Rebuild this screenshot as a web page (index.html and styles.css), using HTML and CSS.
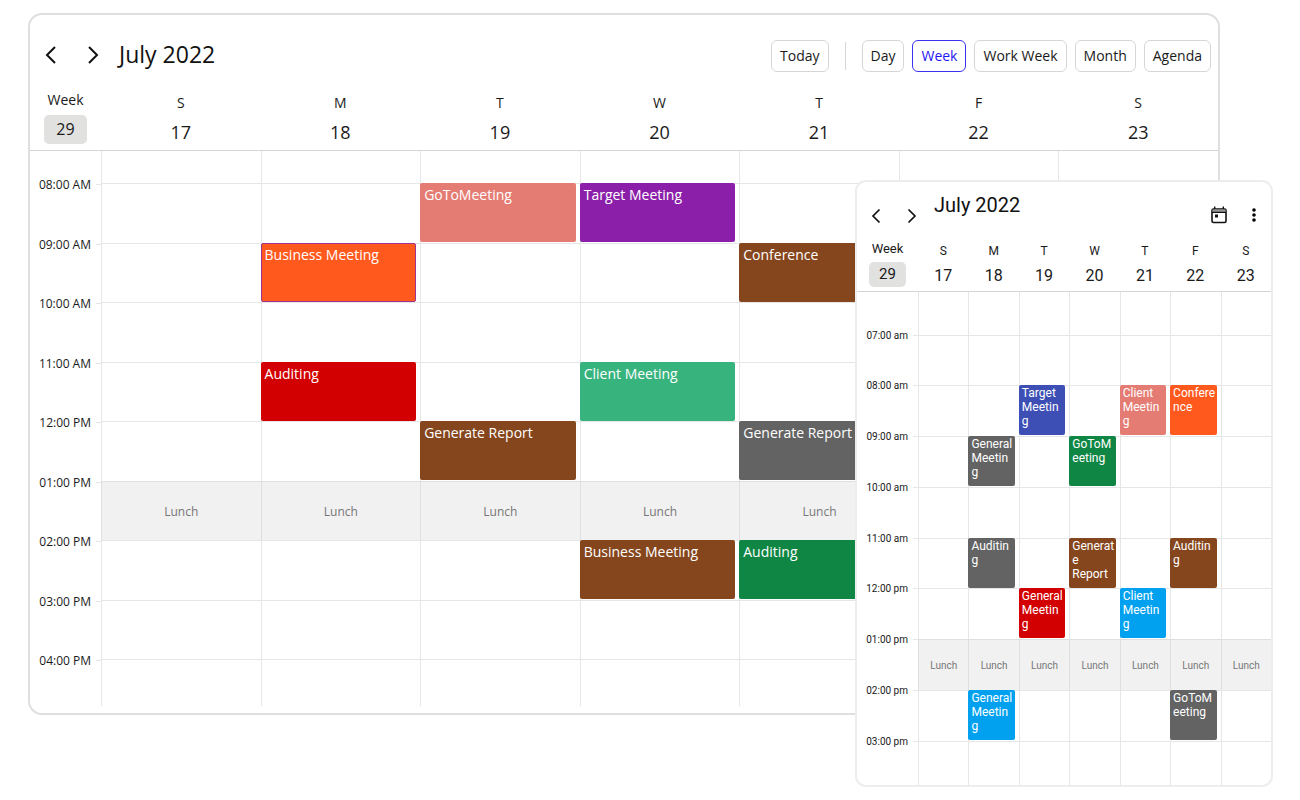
FILE: index.html
```html
<!DOCTYPE html>
<html lang="en">
<head>
    <meta charset="UTF-8">
    <meta name="viewport" content="width=device-width, initial-scale=1.0">
    <title>Scheduler - Week View</title>
    <link rel="stylesheet" href="styles.css">
</head>
<body>
    <main class="stage">
        <!-- Desktop scheduler -->
        <section class="scheduler desktop">
            <header class="toolbar">
                <button type="button" class="nav-btn" aria-label="Previous week">
                    <svg width="12" height="18" viewBox="0 0 12 18"><path d="M10 1 L2 9 L10 17"/></svg>
                </button>
                <button type="button" class="nav-btn" aria-label="Next week">
                    <svg width="12" height="18" viewBox="0 0 12 18"><path d="M2 1 L10 9 L2 17"/></svg>
                </button>
                <h2 class="title">July 2022</h2>
                <div class="views">
                    <button type="button" class="view-btn">Today</button>
                    <span class="divider"></span>
                    <button type="button" class="view-btn">Day</button>
                    <button type="button" class="view-btn active">Week</button>
                    <button type="button" class="view-btn">Work Week</button>
                    <button type="button" class="view-btn">Month</button>
                    <button type="button" class="view-btn">Agenda</button>
                </div>
            </header>
            <table class="week">
                <thead>
                    <tr>
                        <th class="week-no">Week<span class="badge">29</span></th>
                        <th>S<span class="date">17</span></th>
                        <th>M<span class="date">18</span></th>
                        <th>T<span class="date">19</span></th>
                        <th>W<span class="date">20</span></th>
                        <th>T<span class="date">21</span></th>
                        <th>F<span class="date">22</span></th>
                        <th>S<span class="date">23</span></th>
                    </tr>
                </thead>
                <tbody>
                    <tr>
                        <th></th>
                        <td></td><td></td><td></td><td></td><td></td><td></td><td></td>
                    </tr>
                    <tr>
                        <th><span class="time">08:00 AM</span></th>
                        <td></td>
                        <td></td>
                        <td><div class="event salmon">GoToMeeting</div></td>
                        <td><div class="event purple">Target Meeting</div></td>
                        <td></td>
                        <td></td>
                        <td></td>
                    </tr>
                    <tr>
                        <th><span class="time">09:00 AM</span></th>
                        <td></td>
                        <td><div class="event orange selected">Business Meeting</div></td>
                        <td></td>
                        <td></td>
                        <td><div class="event brown">Conference</div></td>
                        <td></td>
                        <td></td>
                    </tr>
                    <tr>
                        <th><span class="time">10:00 AM</span></th>
                        <td></td><td></td><td></td><td></td><td></td><td></td><td></td>
                    </tr>
                    <tr>
                        <th><span class="time">11:00 AM</span></th>
                        <td></td>
                        <td><div class="event red">Auditing</div></td>
                        <td></td>
                        <td><div class="event mint">Client Meeting</div></td>
                        <td></td>
                        <td></td>
                        <td></td>
                    </tr>
                    <tr>
                        <th><span class="time">12:00 PM</span></th>
                        <td></td>
                        <td></td>
                        <td><div class="event brown">Generate Report</div></td>
                        <td></td>
                        <td><div class="event gray">Generate Report</div></td>
                        <td></td>
                        <td></td>
                    </tr>
                    <tr class="lunch">
                        <th><span class="time">01:00 PM</span></th>
                        <td>Lunch</td><td>Lunch</td><td>Lunch</td><td>Lunch</td><td>Lunch</td><td></td><td></td>
                    </tr>
                    <tr>
                        <th><span class="time">02:00 PM</span></th>
                        <td></td>
                        <td></td>
                        <td></td>
                        <td><div class="event brown">Business Meeting</div></td>
                        <td><div class="event green">Auditing</div></td>
                        <td></td>
                        <td></td>
                    </tr>
                    <tr>
                        <th><span class="time">03:00 PM</span></th>
                        <td></td><td></td><td></td><td></td><td></td><td></td><td></td>
                    </tr>
                    <tr>
                        <th><span class="time">04:00 PM</span></th>
                        <td></td><td></td><td></td><td></td><td></td><td></td><td></td>
                    </tr>
                </tbody>
            </table>
        </section>

        <!-- Mobile scheduler -->
        <section class="scheduler mobile">
            <header class="toolbar">
                <button type="button" class="nav-btn" aria-label="Previous week">
                    <svg width="10" height="16" viewBox="0 0 10 16"><path d="M8.5 1.5 L2 8 L8.5 14.5"/></svg>
                </button>
                <button type="button" class="nav-btn" aria-label="Next week">
                    <svg width="10" height="16" viewBox="0 0 10 16"><path d="M1.5 1.5 L8 8 L1.5 14.5"/></svg>
                </button>
                <h2 class="title">July 2022</h2>
                <button type="button" class="icon-btn" aria-label="Go to date">
                    <svg width="16" height="18" viewBox="0 0 16 18">
                        <rect x="1" y="3" width="14" height="13.5" rx="1.5" fill="none" stroke="#111" stroke-width="1.6"/>
                        <rect x="1.5" y="3.5" width="13" height="2.5" fill="#999"/>
                        <path d="M1 6.4 H15 M3.7 0.5 V3 M12.3 0.5 V3" stroke="#111" stroke-width="1.4"/>
                        <rect x="4" y="8.5" width="3" height="3" fill="#111"/>
                    </svg>
                </button>
                <button type="button" class="icon-btn" aria-label="More options">
                    <svg width="4" height="14" viewBox="0 0 4 14">
                        <circle cx="2" cy="2" r="1.8"/><circle cx="2" cy="7" r="1.8"/><circle cx="2" cy="12" r="1.8"/>
                    </svg>
                </button>
            </header>
            <table class="week">
                <thead>
                    <tr>
                        <th class="week-no">Week<span class="badge">29</span></th>
                        <th>S<span class="date">17</span></th>
                        <th>M<span class="date">18</span></th>
                        <th>T<span class="date">19</span></th>
                        <th>W<span class="date">20</span></th>
                        <th>T<span class="date">21</span></th>
                        <th>F<span class="date">22</span></th>
                        <th>S<span class="date">23</span></th>
                    </tr>
                </thead>
                <tbody>
                    <tr>
                        <th></th>
                        <td></td><td></td><td></td><td></td><td></td><td></td><td></td>
                    </tr>
                    <tr>
                        <th><span class="time">07:00 am</span></th>
                        <td></td><td></td><td></td><td></td><td></td><td></td><td></td>
                    </tr>
                    <tr>
                        <th><span class="time">08:00 am</span></th>
                        <td></td>
                        <td></td>
                        <td><div class="event indigo">Target Meeting</div></td>
                        <td></td>
                        <td><div class="event salmon">Client Meeting</div></td>
                        <td><div class="event orange">Conference</div></td>
                        <td></td>
                    </tr>
                    <tr>
                        <th><span class="time">09:00 am</span></th>
                        <td></td>
                        <td><div class="event gray">General Meeting</div></td>
                        <td></td>
                        <td><div class="event green">GoToMeeting</div></td>
                        <td></td>
                        <td></td>
                        <td></td>
                    </tr>
                    <tr>
                        <th><span class="time">10:00 am</span></th>
                        <td></td><td></td><td></td><td></td><td></td><td></td><td></td>
                    </tr>
                    <tr>
                        <th><span class="time">11:00 am</span></th>
                        <td></td>
                        <td><div class="event gray">Auditing</div></td>
                        <td></td>
                        <td><div class="event brown">Generate Report</div></td>
                        <td></td>
                        <td><div class="event brown">Auditing</div></td>
                        <td></td>
                    </tr>
                    <tr>
                        <th><span class="time">12:00 pm</span></th>
                        <td></td>
                        <td></td>
                        <td><div class="event red">General Meeting</div></td>
                        <td></td>
                        <td><div class="event blue">Client Meeting</div></td>
                        <td></td>
                        <td></td>
                    </tr>
                    <tr class="lunch">
                        <th><span class="time">01:00 pm</span></th>
                        <td>Lunch</td><td>Lunch</td><td>Lunch</td><td>Lunch</td><td>Lunch</td><td>Lunch</td><td>Lunch</td>
                    </tr>
                    <tr>
                        <th><span class="time">02:00 pm</span></th>
                        <td></td>
                        <td><div class="event blue">General Meeting</div></td>
                        <td></td>
                        <td></td>
                        <td></td>
                        <td><div class="event gray">GoToMeeting</div></td>
                        <td></td>
                    </tr>
                    <tr>
                        <th><span class="time">03:00 pm</span></th>
                        <td></td><td></td><td></td><td></td><td></td><td></td><td></td>
                    </tr>
                </tbody>
            </table>
        </section>
    </main>
</body>
</html>
```

FILE: styles.css
```css
* {
    box-sizing: border-box;
}
body {
    margin: 0;
    background: #fff;
    color: #1a1a1a;
}
/* both schedulers share one grid cell so the phone view overlaps the desktop one */
.stage {
    display: grid;
    align-items: start;
    padding: 13px 27px 13px 28px;
}
.scheduler {
    grid-area: 1 / 1;
    background: #fff;
    border: 2px solid #dfdfdf;
    overflow: hidden;
}
.desktop {
    margin-right: 53px;
    border-radius: 14px;
    padding-bottom: 7px;
    font-family: "Open Sans", "Noto Sans", sans-serif;
}
.mobile {
    justify-self: end;
    width: 418px;
    margin-top: 167px;
    border-color: #ededed;
    border-radius: 11px;
    font-family: Roboto, sans-serif;
}

/* toolbar */
.toolbar {
    display: flex;
    align-items: center;
}
.desktop .toolbar {
    height: 73px;
    padding: 8px 7px 0 0;
}
.mobile .toolbar {
    height: 56px;
    padding: 10px 0 0 1px;
}
button {
    font: inherit;
    color: inherit;
    background: none;
    border: none;
    padding: 0;
    cursor: pointer;
}
.nav-btn {
    display: flex;
    justify-content: center;
    width: 42px;
    padding-bottom: 2px;
}
.mobile .nav-btn {
    width: 36px;
    padding: 2px 0 0;
}
.nav-btn path {
    fill: none;
    stroke: #111;
    stroke-width: 2;
}
.mobile .nav-btn path {
    stroke-width: 1.7;
}
.icon-btn {
    display: flex;
    justify-content: center;
    width: 35px;
}
.title {
    flex: 1;
    margin: 0;
    font-weight: 400;
    color: #111;
}
.desktop .title {
    padding: 0 0 4px 5px;
    font-size: 23px;
    line-height: 30px;
}
.mobile .title {
    padding: 0 0 20px 4px;
    font-size: 20px;
    line-height: 24px;
}
.views {
    display: flex;
    align-items: center;
    gap: 8px;
}
.view-btn {
    height: 32px;
    padding: 0 8px;
    border: 1px solid #d6d6d6;
    border-radius: 6px;
    font-size: 14px;
}
.view-btn.active {
    border: 1px solid #3a32f0;
    color: #1f16f5;
}
.divider {
    width: 1px;
    height: 28px;
    margin: 0 8px;
    background: #d6d6d6;
}

/* week grid */
.week {
    width: 100%;
    table-layout: fixed;
    border-spacing: 0;
}
.week th,
.week td {
    padding: 0;
    font-weight: 400;
    vertical-align: top;
}
.week td {
    border-top: 1px solid #e6e6e6;
    border-left: 1px solid #e6e6e6;
}
.week tbody tr:first-child td {
    border-top: none;
}
.week thead th {
    border-bottom: 1px solid #d4d4d4;
}
.desktop thead th {
    height: 63px;
    padding-top: 5px;
    font-size: 14px;
    line-height: 20px;
}
.desktop thead .week-no {
    width: 71px;
    padding-top: 2px;
}
.date {
    display: block;
}
.desktop .date {
    padding-top: 7px;
    font-size: 18px;
    line-height: 24px;
}
.badge {
    display: block;
    margin: 5px auto 0;
    background: #e1e1e0;
    border-radius: 5px;
}
.desktop .badge {
    width: 43px;
    font-size: 16px;
    line-height: 29px;
}
.mobile thead th {
    height: 54px;
    padding-top: 5px;
    font-size: 12px;
    line-height: 16px;
}
.mobile thead .week-no {
    width: 61px;
    padding-top: 3px;
    font-size: 13px;
}
.mobile .date {
    padding-top: 7px;
    font-size: 16px;
    line-height: 20px;
}
.mobile .badge {
    width: 37px;
    font-size: 15px;
    line-height: 25px;
}

/* row heights */
.desktop tbody tr {
    height: 59px;
}
.desktop tbody tr:nth-child(even) {
    height: 60px;
}
.desktop tbody tr:first-child {
    height: 32px;
}
.desktop tbody tr:last-child {
    height: 47px;
}
.mobile tbody tr {
    height: 51px;
}
.mobile tbody tr:nth-child(4n+2) {
    height: 50px;
}
.mobile tbody tr:first-child {
    height: 43px;
}
.mobile tbody tr:last-child {
    height: 44px;
}

/* hour labels sit on the row line, with a short tick after them */
.time {
    display: flex;
    align-items: center;
    justify-content: flex-end;
    gap: 5px;
    height: 20px;
    margin-top: -9px;
    margin-bottom: -9px;
    white-space: nowrap;
}
.time::after {
    content: "";
    width: 5px;
    height: 1px;
    background: #e6e6e6;
}
.desktop .time {
    font-size: 12px;
}
.mobile .time {
    margin-top: -10px;
    font-size: 10px;
}

.week .lunch td {
    background: #f1f1f1;
    border-color: #dfdfdf;
    color: #777;
    text-align: center;
    vertical-align: middle;
}
.desktop .lunch td {
    font-size: 12px;
}
.mobile .lunch td {
    font-size: 10px;
}

/* events */
.event {
    margin: -1px 4px 0 -1px;
    border-radius: 2px;
    color: #fff;
    overflow: hidden;
    overflow-wrap: anywhere;
}
.desktop .event {
    height: 59px;
    padding: 2px 4px;
    font-size: 14px;
    line-height: 20px;
}
.mobile .event {
    height: 50px;
    padding: 1px 1px 0 3px;
    font-size: 12px;
    line-height: 14px;
}
.desktop .selected {
    padding: 1px 3px;
    border: 1px solid #a0338f;
}
.salmon { background: #e57c73; }
.purple { background: #8b1fa9; }
.orange { background: #ff591e; }
.brown { background: #86461d; }
.red { background: #d20000; }
.mint { background: #37b47e; }
.gray { background: #636363; }
.green { background: #0f8644; }
.indigo { background: #3d4fb5; }
.blue { background: #01a1ef; }
```
